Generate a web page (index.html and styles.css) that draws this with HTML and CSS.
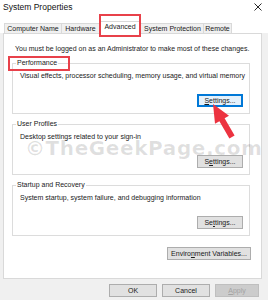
FILE: index.html
```html
<!DOCTYPE html>
<html>
<head>
<meta charset="utf-8">
<link rel="stylesheet" href="styles.css">
</head>
<body>
<div class="window">
  <div class="titlebar">
    <span class="title">System Properties</span>
    <svg class="close" width="8" height="8" viewBox="0 0 8 8"><path d="M0.5 0.5 L7.5 7.5 M7.5 0.5 L0.5 7.5" stroke="#111" stroke-width="0.9" fill="none"/></svg>
  </div>
  <div class="tabs">
    <div class="tab t-name">Computer Name</div>
    <div class="tab t-hw">Hardware</div>
    <div class="tab selected">Advanced</div>
    <div class="tab t-sp">System Protection</div>
    <div class="tab t-rem">Remote</div>
  </div>
  <div class="panel">
    <p class="notice">You must be logged on as an Administrator to make most of these changes.</p>
    <fieldset class="group">
      <legend class="highlight">Performance</legend>
      <p class="desc">Visual effects, processor scheduling, memory usage, and virtual memory</p>
      <div class="btn-row"><button class="btn focused"><u>S</u>ettings...</button></div>
    </fieldset>
    <fieldset class="group">
      <legend>User Profiles</legend>
      <p class="desc">Desktop settings related to your sign-in</p>
      <div class="btn-row"><button class="btn">S<u>e</u>ttings...</button></div>
    </fieldset>
    <fieldset class="group">
      <legend>Startup and Recovery</legend>
      <p class="desc">System startup, system failure, and debugging information</p>
      <div class="btn-row"><button class="btn">Se<u>t</u>tings...</button></div>
    </fieldset>
    <div class="env-row"><button class="btn env">Enviro<u>n</u>ment Variables...</button></div>
  </div>
  <div class="footer">
    <button class="btn foot">OK</button>
    <button class="btn foot">Cancel</button>
    <button class="btn foot disabled"><u>A</u>pply</button>
  </div>
  <div class="watermark">©TheGeekPage.com</div>
  <svg class="arrow" width="268" height="300" viewBox="0 0 268 300">
    <polygon points="213,104 229,115.7 224.6,118.2 234.6,135.5 229.4,138.5 219.4,121.2 215,123.7" fill="#ec3340"/>
  </svg>
</div>
</body>
</html>
```

FILE: styles.css
```css
* { box-sizing: border-box; }
html, body { margin: 0; padding: 0; }
body {
  width: 268px;
  height: 300px;
  overflow: hidden;
  background: #f0f0f0;
  font-family: "Liberation Sans", Arial, sans-serif;
  font-size: 7px;
  color: #1a1a1a;
}
.window {
  position: relative;
  width: 268px;
  height: 300px;
  background: #f0f0f0;
}
.titlebar {
  height: 14px;
  background: #ffffff;
  display: flex;
  align-items: center;
  justify-content: space-between;
  padding: 0 6px 1px 3px;
}
.title { font-size: 8.5px; color: #111; }
.close { display: block; }
.tabs {
  display: flex;
  align-items: flex-end;
  height: 19px;
  padding-left: 4px;
  background: #ffffff;
  position: relative;
  z-index: 2;
}
.tab {
  flex: none;
  height: 10px;
  line-height: 9px;
  padding: 0;
  text-align: center;
  border: 1px solid #d9d9d9;
  border-bottom: none;
  border-right: none;
  background: #f0f0f0;
  white-space: nowrap;
}
.t-name { width: 57px; }
.t-hw { width: 40px; padding-right: 2px; }
.t-sp { width: 64px; padding-left: 2px; }
.t-rem { width: 29px; border-right: 1px solid #d9d9d9; }
.tab.selected {
  position: relative;
  width: 42px;
  height: 13px;
  line-height: 10px;
  margin: 0 -2px -1px -2px;
  background: #ffffff;
  border-right: 1px solid #d9d9d9;
  z-index: 3;
}
.tab.selected::after {
  content: "";
  position: absolute;
  left: -1px;
  right: -1px;
  top: -8px;
  bottom: -3px;
  border: 2px solid #e8414a;
}
.panel {
  margin: 0 6px 0 3px;
  height: 246px;
  background: #ffffff;
  border: 1px solid #d9d9d9;
  padding-top: 10px;
  display: flex;
  flex-direction: column;
}
.notice {
  margin: 0 0 4px 11px;
  line-height: 10px;
  white-space: nowrap;
}
.group {
  margin: 0 11px 5px 8px;
  padding: 0 6px 6px 6px;
  border: 1px solid #dcdcdc;
  min-width: 0;
}
.group legend {
  position: relative;
  margin-left: -3px;
  padding: 0 1px;
  line-height: 10px;
}
.group legend.highlight::after {
  content: "";
  position: absolute;
  left: -8px;
  right: -12px;
  top: -2px;
  bottom: -3px;
  border: 2px solid #e8414a;
}
.desc {
  margin: 3px 0 0 1px;
  line-height: 10px;
  white-space: nowrap;
}
.btn-row {
  display: flex;
  justify-content: flex-end;
  margin-top: 13px;
}
.btn {
  font-family: inherit;
  font-size: 7px;
  color: #1a1a1a;
  background: #e1e1e1;
  border: 1px solid #adadad;
  height: 13px;
  padding: 0;
  line-height: 11px;
  width: 46px;
  margin: 0;
  white-space: nowrap;
}
.btn u { text-decoration-thickness: 0.5px; text-underline-offset: 1px; }
.btn.focused {
  border: 1px solid #0078d7;
  box-shadow: inset 0 0 0 1px #0078d7;
  background: #e5f1fb;
}
.env-row {
  display: flex;
  justify-content: flex-end;
  margin: 6px 10px 0 0;
}
.btn.env { width: 84px; }
.footer {
  display: flex;
  justify-content: flex-end;
  gap: 5px;
  padding: 5px 9px 0 0;
}
.btn.foot { width: 48px; }
.btn.disabled {
  color: #a3a3a3;
  background: #cccccc;
  border-color: #bfbfbf;
  width: 44px;
}
.watermark {
  position: absolute;
  left: 25px;
  top: 141px;
  font-family: "DejaVu Sans", sans-serif;
  font-weight: bold;
  font-size: 20px;
  line-height: 14px;
  height: 14px;
  color: rgba(0, 0, 0, 0.12);
  white-space: nowrap;
  pointer-events: none;
  letter-spacing: 0.6px;
}
.arrow {
  position: absolute;
  left: 0;
  top: 0;
  pointer-events: none;
}
```
